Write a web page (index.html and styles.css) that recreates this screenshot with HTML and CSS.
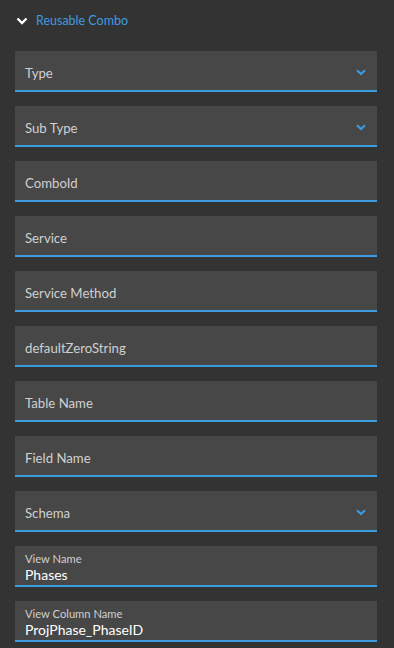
FILE: index.html
```html
<!DOCTYPE html>
<html>
<head>
<meta charset="utf-8">
<link rel="stylesheet" href="styles.css">
</head>
<body>
<div class="panel">
  <div class="header">
    <svg class="hchev" width="12" height="8" viewBox="0 0 12 8"><path d="M1.5 1.5 L6 6 L10.5 1.5" fill="none" stroke="#ffffff" stroke-width="2.4"/></svg>
    <span class="htitle">Reusable Combo</span>
  </div>
  <div class="fields">
    <div class="field"><span class="ph">Type</span><svg class="chev" width="10" height="7" viewBox="0 0 10 7"><path d="M1 1.2 L5 5 L9 1.2" fill="none" stroke="#3d9be0" stroke-width="2"/></svg></div>
    <div class="field"><span class="ph">Sub Type</span><svg class="chev" width="10" height="7" viewBox="0 0 10 7"><path d="M1 1.2 L5 5 L9 1.2" fill="none" stroke="#3d9be0" stroke-width="2"/></svg></div>
    <div class="field"><span class="ph">ComboId</span></div>
    <div class="field"><span class="ph">Service</span></div>
    <div class="field"><span class="ph">Service Method</span></div>
    <div class="field"><span class="ph">defaultZeroString</span></div>
    <div class="field"><span class="ph">Table Name</span></div>
    <div class="field"><span class="ph">Field Name</span></div>
    <div class="field"><span class="ph">Schema</span><svg class="chev" width="10" height="7" viewBox="0 0 10 7"><path d="M1 1.2 L5 5 L9 1.2" fill="none" stroke="#3d9be0" stroke-width="2"/></svg></div>
    <div class="field filled"><div class="stack"><span class="lbl">View Name</span><span class="val">Phases</span></div></div>
    <div class="field filled"><div class="stack"><span class="lbl">View Column Name</span><span class="val">ProjPhase_PhaseID</span></div></div>
  </div>
</div>
</body>
</html>
```
FILE: styles.css
```css
html, body {
  margin: 0;
  padding: 0;
  background: #333333;
  height: 100%;
}
body {
  font-family: Lato, "Open Sans", sans-serif;
  overflow: hidden;
}
.panel {
  width: 394px;
  height: 648px;
  box-sizing: border-box;
  padding: 0 17px 0 15px;
  background: #333333;
}
.header {
  height: 51px;
  display: flex;
  align-items: center;
  padding-bottom: 10px;
  box-sizing: border-box;
}
.hchev {
  margin-left: 1px;
  margin-right: 8px;
}
.htitle {
  color: #3d9be0;
  font-size: 12.5px;
}
.fields {
  display: flex;
  flex-direction: column;
  gap: 14px;
}
.field {
  height: 41px;
  box-sizing: border-box;
  background: #474747;
  border-bottom: 2px solid #3d9be0;
  display: flex;
  align-items: center;
  justify-content: space-between;
  padding: 4px 10px 0 10px;
}
.ph {
  color: #d0d0d0;
  font-size: 13.2px;
}
.chev {
  margin-right: 1px;
}
.filled {
  align-items: flex-end;
  padding-bottom: 1px;
}
.stack {
  display: flex;
  flex-direction: column;
}
.lbl {
  color: #cfcfcf;
  font-size: 11.2px;
  line-height: 14px;
}
.val {
  color: #ffffff;
  font-size: 14px;
  line-height: 18px;
}
```
